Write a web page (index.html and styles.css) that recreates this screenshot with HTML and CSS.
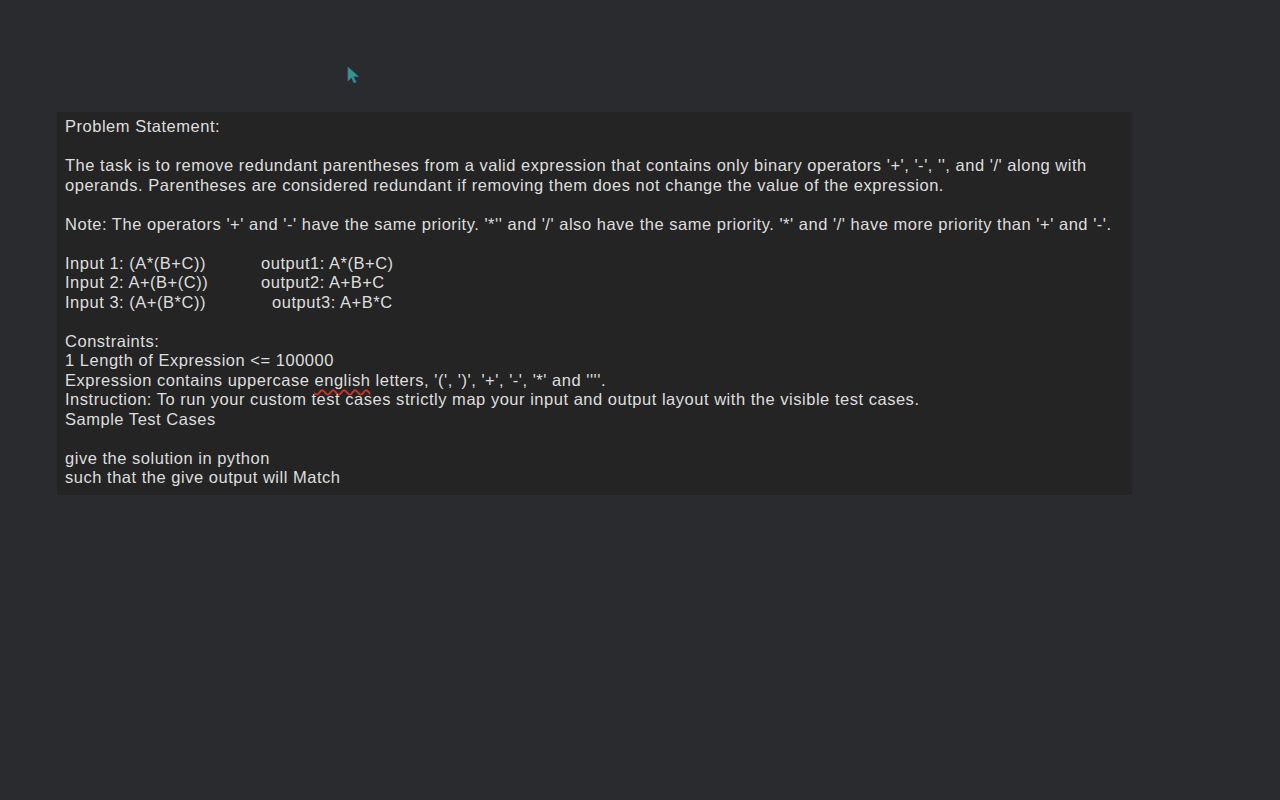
FILE: index.html
```html
<!DOCTYPE html>
<html>
<head>
<meta charset="utf-8">
<link rel="stylesheet" href="styles.css">
</head>
<body>
<div class="page">
  <svg class="cursor" width="14" height="18" viewBox="0 0 14 18"><path d="M1 1 L1 15 L4.5 11.5 L7 17 L9 16 L6.5 10.5 L11.5 10.5 Z" fill="#2f9e7e" stroke="#3a6aa8" stroke-width="0.8"/></svg>
  <div class="box">
    <p class="line">Problem Statement:</p>
    <p class="blank"></p>
    <p class="line">The task is to remove redundant parentheses from a valid expression that contains only binary operators '+', '-', '', and '/' along with</p>
    <p class="line">operands. Parentheses are considered redundant if removing them does not change the value of the expression.</p>
    <p class="blank"></p>
    <p class="line">Note: The operators '+' and '-' have the same priority. '*'' and '/' also have the same priority. '*' and '/' have more priority than '+' and '-'.</p>
    <p class="blank"></p>
    <div class="ex"><span class="in">Input 1: (A*(B+C))</span><span class="out">output1: A*(B+C)</span></div>
    <div class="ex"><span class="in">Input 2: A+(B+(C))</span><span class="out">output2: A+B+C</span></div>
    <div class="ex"><span class="in">Input 3: (A+(B*C))</span><span class="out o3">output3: A+B*C</span></div>
    <p class="blank"></p>
    <p class="line">Constraints:</p>
    <p class="line">1 Length of Expression &lt;= 100000</p>
    <p class="line">Expression contains uppercase <span class="spell">english</span> letters, '(', ')', '+', '-', '*' and ''''.</p>
    <p class="line">Instruction: To run your custom test cases strictly map your input and output layout with the visible test cases.</p>
    <p class="line">Sample Test Cases</p>
    <p class="blank"></p>
    <p class="line">give the solution in python</p>
    <p class="line">such that the give output will Match</p>
  </div>
</div>
</body>
</html>
```
FILE: styles.css
```css
html, body {
  margin: 0;
  padding: 0;
  background: #2a2b2e;
}
.page {
  position: relative;
  width: 1280px;
  height: 800px;
  padding-top: 112px;
  padding-left: 57px;
  box-sizing: border-box;
}
.cursor {
  position: absolute;
  left: 347px;
  top: 66px;
}
.box {
  width: 1075px;
  height: 383px;
  box-sizing: border-box;
  background: #242424;
  padding: 5px 8px 7px 8px;
  font-family: "Liberation Sans", Arial, sans-serif;
  font-size: 16.5px;
  letter-spacing: 0.52px;
  line-height: 19.5px;
  color: #dedede;
}
.line, .blank {
  margin: 0;
  height: 19.5px;
  white-space: nowrap;
}
.ex {
  display: flex;
  height: 19.5px;
  white-space: nowrap;
}
.in {
  width: 196px;
}
.o3 {
  margin-left: 11px;
}
.spell {
  text-decoration-line: underline;
  text-decoration-style: wavy;
  text-decoration-color: #d0302a;
  text-decoration-thickness: 1.5px;
  text-decoration-skip-ink: none;
  text-underline-offset: 3px;
}
```
